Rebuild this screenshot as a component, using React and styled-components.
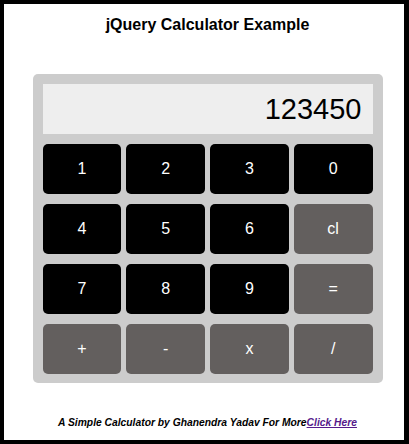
import React from "react";
import styled, { createGlobalStyle } from "styled-components";

const Global = createGlobalStyle`
  html, body { margin: 0; padding: 0; background: #fff; }
  body { font-family: "Liberation Sans", Arial, sans-serif; }
  * { box-sizing: border-box; }
`;

const Frame = styled.div`
  width: 409px;
  height: 444px;
  border: 4px solid #000;
  border-right-width: 5px;
  background: #fff;
  padding: 12px 0 0 7px;
  display: flex;
  flex-direction: column;
  overflow: hidden;
`;

const Title = styled.h3`
  margin: 0;
  font-size: 16px;
  line-height: 18px;
  font-weight: bold;
  text-align: center;
  color: #000;
`;

const Panel = styled.div`
  width: 350px;
  margin: 40px auto 0;
  background: #cccccc;
  border-radius: 5px;
  padding: 10px 10px 9px;
`;

const Display = styled.div`
  height: 50px;
  background: #eeeeee;
  font-size: 29px;
  line-height: 50px;
  text-align: right;
  padding-right: 11px;
  color: #000;
`;

const Keys = styled.div`
  margin-top: 10px;
  display: grid;
  grid-template-columns: repeat(4, 1fr);
  column-gap: 5px;
  row-gap: 10px;
`;

const Key = styled.div`
  height: 50px;
  border-radius: 5px;
  background: ${(p) => (p.$op ? "#635f5e" : "#000")};
  color: #fff;
  font-size: 16px;
  line-height: 50px;
  text-align: center;
  cursor: pointer;
`;

const Footer = styled.p`
  margin: 34px 0 0;
  font-size: 10.3px;
  line-height: 12px;
  font-weight: bold;
  font-style: italic;
  text-align: center;
  color: #000;
`;

const Link = styled.a`
  color: #551a8b;
  text-decoration: underline;
`;

const keys = [
  ["1", false], ["2", false], ["3", false], ["0", false],
  ["4", false], ["5", false], ["6", false], ["cl", true],
  ["7", false], ["8", false], ["9", false], ["=", true],
  ["+", true], ["-", true], ["x", true], ["/", true],
];

export default function App() {
  return (
    <>
      <Global />
      <Frame>
        <Title>jQuery Calculator Example</Title>
        <Panel>
          <Display>123450</Display>
          <Keys>
            {keys.map(([k, op]) => (
              <Key key={k} $op={op}>{k}</Key>
            ))}
          </Keys>
        </Panel>
        <Footer>
          A Simple Calculator by Ghanendra Yadav For More<Link href="#">Click Here</Link>
        </Footer>
      </Frame>
    </>
  );
}
